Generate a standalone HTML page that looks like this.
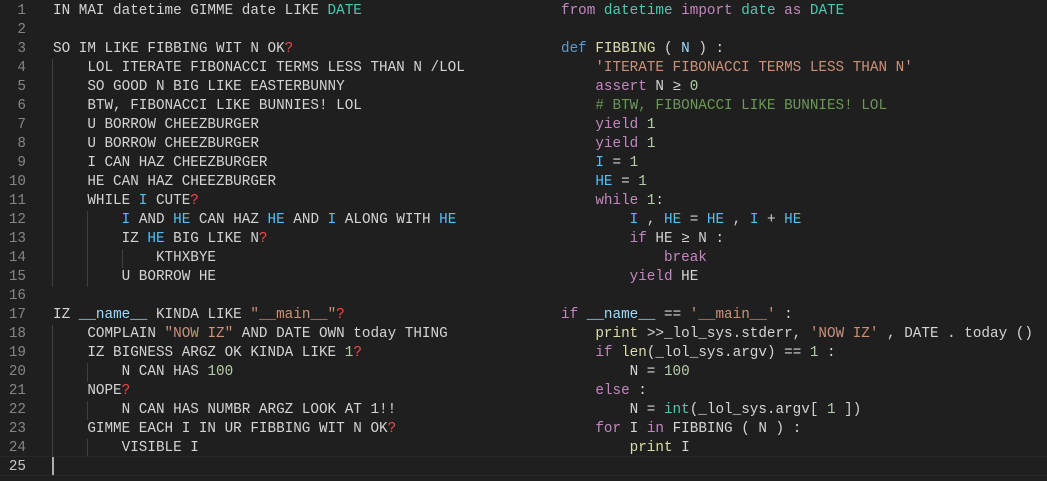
<!DOCTYPE html>
<html><head><meta charset="utf-8"><style>
html,body{margin:0;padding:0;background:#1f1f1f;width:1047px;height:481px;overflow:hidden}
body{font-family:"Liberation Mono","DejaVu Sans Mono",monospace;font-size:14.3px;color:#d4d4d4;position:relative}
.ln{position:absolute;left:0;width:26px;text-align:right;color:#858585;height:19px;line-height:19px;transform:translateY(2px)}
.l{position:absolute;left:53px;white-space:pre;height:19px;line-height:19px;transform:translateY(2px)}
.r{position:absolute;left:561px;white-space:pre;height:19px;line-height:19px;transform:translateY(2px)}
.g{position:absolute;width:1px;background:#404040}
.k{color:#c586c0}.b{color:#569cd6}.v{color:#9cdcfe}.i{color:#4fc1ff}.t{color:#4ec9b0}.q{color:#f44747}
.s{color:#ce9178}.c{color:#6a9955}.n{color:#b5cea8}.f{color:#dcdcaa}
.cur{position:absolute;left:0;top:456px;width:1047px;height:18px;border-top:1px solid #282828;border-bottom:1px solid #282828}
</style></head><body>
<div class="cur"></div>
<div style="position:absolute;left:52px;top:457px;width:2px;height:18px;background:#aeafad"></div>
<div class="g" style="left:52px;top:59px;height:228px"></div>
<div class="g" style="left:87px;top:211px;height:76px"></div>
<div class="g" style="left:122px;top:249px;height:19px"></div>
<div class="g" style="left:52px;top:325px;height:131px"></div>
<div class="g" style="left:87px;top:363px;height:19px"></div>
<div class="g" style="left:87px;top:401px;height:19px"></div>
<div class="g" style="left:87px;top:439px;height:17px"></div>

<div class="ln" style="top:0">1</div><div class="ln" style="top:19px">2</div><div class="ln" style="top:38px">3</div><div class="ln" style="top:57px">4</div><div class="ln" style="top:76px">5</div><div class="ln" style="top:95px">6</div><div class="ln" style="top:114px">7</div><div class="ln" style="top:133px">8</div><div class="ln" style="top:152px">9</div><div class="ln" style="top:171px">10</div><div class="ln" style="top:190px">11</div><div class="ln" style="top:209px">12</div><div class="ln" style="top:228px">13</div><div class="ln" style="top:247px">14</div><div class="ln" style="top:266px">15</div><div class="ln" style="top:285px">16</div><div class="ln" style="top:304px">17</div><div class="ln" style="top:323px">18</div><div class="ln" style="top:342px">19</div><div class="ln" style="top:361px">20</div><div class="ln" style="top:380px">21</div><div class="ln" style="top:399px">22</div><div class="ln" style="top:418px">23</div><div class="ln" style="top:437px">24</div><div class="ln" style="top:456px;color:#c6c6c6">25</div>

<div class="l" style="top:0">IN MAI datetime GIMME date LIKE <span class="t">DATE</span></div>
<div class="l" style="top:38px">SO IM LIKE FIBBING WIT N OK<span class="q">?</span></div>
<div class="l" style="top:57px">    LOL ITERATE FIBONACCI TERMS LESS THAN N /LOL</div>
<div class="l" style="top:76px">    SO GOOD N BIG LIKE EASTERBUNNY</div>
<div class="l" style="top:95px">    BTW, FIBONACCI LIKE BUNNIES! LOL</div>
<div class="l" style="top:114px">    U BORROW CHEEZBURGER</div>
<div class="l" style="top:133px">    U BORROW CHEEZBURGER</div>
<div class="l" style="top:152px">    I CAN HAZ CHEEZBURGER</div>
<div class="l" style="top:171px">    HE CAN HAZ CHEEZBURGER</div>
<div class="l" style="top:190px">    WHILE <span class="i">I</span> CUTE<span class="q">?</span></div>
<div class="l" style="top:209px">        <span class="i">I</span> AND <span class="i">HE</span> CAN HAZ <span class="i">HE</span> AND <span class="i">I</span> ALONG WITH <span class="i">HE</span></div>
<div class="l" style="top:228px">        IZ <span class="i">HE</span> BIG LIKE N<span class="q">?</span></div>
<div class="l" style="top:247px">            KTHXBYE</div>
<div class="l" style="top:266px">        U BORROW HE</div>
<div class="l" style="top:304px">IZ <span class="v">__name__</span> KINDA LIKE <span class="s">"__main__"</span><span class="q">?</span></div>
<div class="l" style="top:323px">    COMPLAIN <span class="s">"NOW IZ"</span> AND DATE OWN today THING</div>
<div class="l" style="top:342px">    IZ BIGNESS ARGZ OK KINDA LIKE <span class="n">1</span><span class="q">?</span></div>
<div class="l" style="top:361px">        N CAN HAS <span class="n">100</span></div>
<div class="l" style="top:380px">    NOPE<span class="q">?</span></div>
<div class="l" style="top:399px">        N CAN HAS NUMBR ARGZ LOOK AT 1!!</div>
<div class="l" style="top:418px">    GIMME EACH I IN UR FIBBING WIT N OK<span class="q">?</span></div>
<div class="l" style="top:437px">        VISIBLE I</div>

<div class="r" style="top:0"><span class="k">from</span> <span class="t">datetime</span> <span class="k">import</span> <span class="t">date</span> <span class="k">as</span> <span class="t">DATE</span></div>
<div class="r" style="top:38px"><span class="b">def</span> <span class="f">FIBBING</span> ( <span class="v">N</span> ) :</div>
<div class="r" style="top:57px">    <span class="s">'ITERATE FIBONACCI TERMS LESS THAN N'</span></div>
<div class="r" style="top:76px">    <span class="k">assert</span> N ≥ <span class="n">0</span></div>
<div class="r" style="top:95px">    <span class="c"># BTW, FIBONACCI LIKE BUNNIES! LOL</span></div>
<div class="r" style="top:114px">    <span class="k">yield</span> <span class="n">1</span></div>
<div class="r" style="top:133px">    <span class="k">yield</span> <span class="n">1</span></div>
<div class="r" style="top:152px">    <span class="i">I</span> = <span class="n">1</span></div>
<div class="r" style="top:171px">    <span class="i">HE</span> = <span class="n">1</span></div>
<div class="r" style="top:190px">    <span class="k">while</span> <span class="n">1</span>:</div>
<div class="r" style="top:209px">        <span class="i">I</span> , <span class="i">HE</span> = <span class="i">HE</span> , <span class="i">I</span> + <span class="i">HE</span></div>
<div class="r" style="top:228px">        <span class="k">if</span> HE ≥ N :</div>
<div class="r" style="top:247px">            <span class="k">break</span></div>
<div class="r" style="top:266px">        <span class="k">yield</span> HE</div>
<div class="r" style="top:304px"><span class="k">if</span> <span class="v">__name__</span> == <span class="s">'__main__'</span> :</div>
<div class="r" style="top:323px">    <span class="f">print</span> &gt;&gt;_lol_sys.stderr, <span class="s">'NOW IZ'</span> , DATE . today ()</div>
<div class="r" style="top:342px">    <span class="k">if</span> <span class="f">len</span>(_lol_sys.argv) == <span class="n">1</span> :</div>
<div class="r" style="top:361px">        N = <span class="n">100</span></div>
<div class="r" style="top:380px">    <span class="k">else</span> :</div>
<div class="r" style="top:399px">        N = <span class="t">int</span>(_lol_sys.argv[ <span class="n">1</span> ])</div>
<div class="r" style="top:418px">    <span class="k">for</span> I <span class="k">in</span> FIBBING ( N ) :</div>
<div class="r" style="top:437px">        <span class="f">print</span> I</div>
</body></html>
